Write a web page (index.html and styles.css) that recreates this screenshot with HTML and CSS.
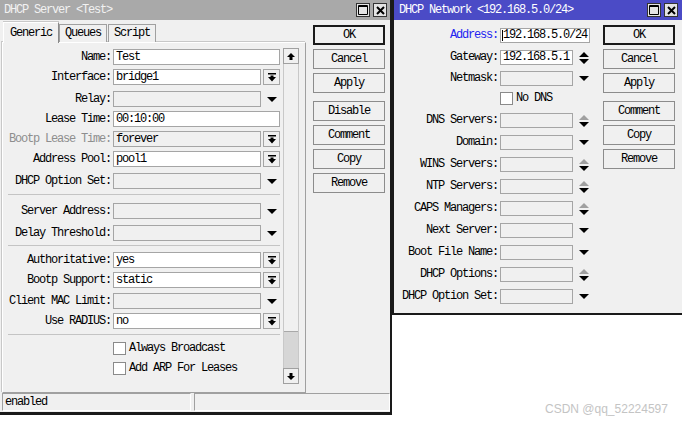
FILE: index.html
```html
<!DOCTYPE html>
<html lang="en">
<head>
  <meta charset="UTF-8">
  <title>DHCP Server</title>
  <link rel="stylesheet" href="styles.css">
</head>
<body>
  <div class="desk">

    <div class="win server">
      <div class="titlebar gray">
        <span class="title">DHCP Server &lt;Test&gt;</span>
        <span class="tbtns">
          <span class="tbtn"><svg width="10" height="10" viewBox="0 0 10 10"><path d="M0.5 0.5H9.5V9.5H0.5Z M0.5 1.5H9.5" fill="none" stroke="#000"/></svg></span>
          <span class="tbtn"><svg width="9" height="9" viewBox="0 0 9 9"><path d="M1 1L8 8M8 1L1 8" stroke="#000" stroke-width="2"/></svg></span>
        </span>
      </div>
      <div class="body">
        <div class="tabarea">
          <div class="tabs">
            <span class="tab sel">Generic</span>
            <span class="tab">Queues</span>
            <span class="tab">Script</span>
          </div>
          <div class="panel">
            <div class="form">
              <div class="row"><span class="lbl">Name:</span><span class="field wide">Test</span></div>
              <div class="row"><span class="lbl">Interface:</span><span class="field">bridge1</span><span class="dd"><svg width="8" height="9" viewBox="0 0 8 9"><path d="M0 0H8V1.5H0Z M2.5 2.5H5.5V4H2.5Z M0 4H8L4 8.5Z"/></svg></span></div>
              <div class="row g2"><span class="lbl">Relay:</span><span class="field off"></span><span class="arrow"><svg width="10" height="5" viewBox="0 0 10 5"><path d="M0 0H10L5 5Z"/></svg></span></div>
              <div class="row"><span class="lbl">Lease Time:</span><span class="field wide">00:10:00</span></div>
              <div class="row"><span class="lbl dim">Bootp Lease Time:</span><span class="field off">forever</span><span class="dd"><svg width="8" height="9" viewBox="0 0 8 9"><path d="M0 0H8V1.5H0Z M2.5 2.5H5.5V4H2.5Z M0 4H8L4 8.5Z"/></svg></span></div>
              <div class="row"><span class="lbl">Address Pool:</span><span class="field">pool1</span><span class="dd"><svg width="8" height="9" viewBox="0 0 8 9"><path d="M0 0H8V1.5H0Z M2.5 2.5H5.5V4H2.5Z M0 4H8L4 8.5Z"/></svg></span></div>
              <div class="row g2"><span class="lbl">DHCP Option Set:</span><span class="field off"></span><span class="arrow"><svg width="10" height="5" viewBox="0 0 10 5"><path d="M0 0H10L5 5Z"/></svg></span></div>
              <div class="sep s1"></div>
              <div class="row"><span class="lbl">Server Address:</span><span class="field off"></span><span class="arrow"><svg width="10" height="5" viewBox="0 0 10 5"><path d="M0 0H10L5 5Z"/></svg></span></div>
              <div class="row g2"><span class="lbl">Delay Threshold:</span><span class="field off"></span><span class="arrow"><svg width="10" height="5" viewBox="0 0 10 5"><path d="M0 0H10L5 5Z"/></svg></span></div>
              <div class="sep s2"></div>
              <div class="row"><span class="lbl">Authoritative:</span><span class="field">yes</span><span class="dd"><svg width="8" height="9" viewBox="0 0 8 9"><path d="M0 0H8V1.5H0Z M2.5 2.5H5.5V4H2.5Z M0 4H8L4 8.5Z"/></svg></span></div>
              <div class="row"><span class="lbl">Bootp Support:</span><span class="field">static</span><span class="dd"><svg width="8" height="9" viewBox="0 0 8 9"><path d="M0 0H8V1.5H0Z M2.5 2.5H5.5V4H2.5Z M0 4H8L4 8.5Z"/></svg></span></div>
              <div class="row g1"><span class="lbl">Client MAC Limit:</span><span class="field off"></span><span class="arrow"><svg width="10" height="5" viewBox="0 0 10 5"><path d="M0 0H10L5 5Z"/></svg></span></div>
              <div class="row"><span class="lbl">Use RADIUS:</span><span class="field">no</span><span class="dd"><svg width="8" height="9" viewBox="0 0 8 9"><path d="M0 0H8V1.5H0Z M2.5 2.5H5.5V4H2.5Z M0 4H8L4 8.5Z"/></svg></span></div>
              <div class="sep s3"></div>
              <div class="check"><span class="box"></span>Always Broadcast</div>
              <div class="check"><span class="box"></span>Add ARP For Leases</div>
            </div>
            <div class="scroll">
              <span class="sbtn"><svg width="8" height="7" viewBox="0 0 8 7"><path d="M4 0L8 4H0Z M2.5 4H5.5V7H2.5Z"/></svg></span>
              <span class="track"><span class="thumb"></span></span>
              <span class="sbtn"><svg width="8" height="7" viewBox="0 0 8 7"><path d="M4 7L8 3H0Z M2.5 0H5.5V3H2.5Z"/></svg></span>
            </div>
          </div>
        </div>
        <div class="btns">
          <span class="btn def">OK</span>
          <span class="btn">Cancel</span>
          <span class="btn">Apply</span>
          <span class="btn more">Disable</span>
          <span class="btn">Comment</span>
          <span class="btn">Copy</span>
          <span class="btn">Remove</span>
        </div>
      </div>
      <div class="status">
        <span class="cell first">enabled</span>
        <span class="cell second"></span>
      </div>
    </div>

    <div class="win network">
      <div class="titlebar blue">
        <span class="title">DHCP Network &lt;192.168.5.0/24&gt;</span>
        <span class="tbtns">
          <span class="tbtn"><svg width="10" height="10" viewBox="0 0 10 10"><path d="M0.5 0.5H9.5V9.5H0.5Z M0.5 1.5H9.5" fill="none" stroke="#000"/></svg></span>
          <span class="tbtn"><svg width="9" height="9" viewBox="0 0 9 9"><path d="M1 1L8 8M8 1L1 8" stroke="#000" stroke-width="2"/></svg></span>
        </span>
      </div>
      <div class="body">
        <div class="form">
          <div class="row h22"><span class="lbl focus">Address:</span><span class="field addr"><span class="caret"></span>192.168.5.0/24</span></div>
          <div class="row"><span class="lbl">Gateway:</span><span class="field">192.168.5.1</span><span class="arrow"><svg width="10" height="12" viewBox="0 0 10 12"><path d="M5 0L10 5H0Z M0 7H10L5 12Z"/></svg></span></div>
          <div class="row"><span class="lbl">Netmask:</span><span class="field off"></span><span class="arrow"><svg width="10" height="5" viewBox="0 0 10 5"><path d="M0 0H10L5 5Z"/></svg></span></div>
          <div class="row"><span class="lbl"></span><span class="box"></span><span class="boxtext">No DNS</span></div>
          <div class="row h22"><span class="lbl">DNS Servers:</span><span class="field off"></span><span class="arrow"><svg width="10" height="12" viewBox="0 0 10 12"><path d="M5 0L10 5H0Z" fill="#a0a0a0"/><path d="M0 7H10L5 12Z"/></svg></span></div>
          <div class="row h22"><span class="lbl">Domain:</span><span class="field off"></span><span class="arrow"><svg width="10" height="5" viewBox="0 0 10 5"><path d="M0 0H10L5 5Z"/></svg></span></div>
          <div class="row h22"><span class="lbl">WINS Servers:</span><span class="field off"></span><span class="arrow"><svg width="10" height="12" viewBox="0 0 10 12"><path d="M5 0L10 5H0Z" fill="#a0a0a0"/><path d="M0 7H10L5 12Z"/></svg></span></div>
          <div class="row h22"><span class="lbl">NTP Servers:</span><span class="field off"></span><span class="arrow"><svg width="10" height="12" viewBox="0 0 10 12"><path d="M5 0L10 5H0Z" fill="#a0a0a0"/><path d="M0 7H10L5 12Z"/></svg></span></div>
          <div class="row h22"><span class="lbl">CAPS Managers:</span><span class="field off"></span><span class="arrow"><svg width="10" height="12" viewBox="0 0 10 12"><path d="M5 0L10 5H0Z" fill="#a0a0a0"/><path d="M0 7H10L5 12Z"/></svg></span></div>
          <div class="row h22"><span class="lbl">Next Server:</span><span class="field off"></span><span class="arrow"><svg width="10" height="5" viewBox="0 0 10 5"><path d="M0 0H10L5 5Z"/></svg></span></div>
          <div class="row h22"><span class="lbl">Boot File Name:</span><span class="field off"></span><span class="arrow"><svg width="10" height="5" viewBox="0 0 10 5"><path d="M0 0H10L5 5Z"/></svg></span></div>
          <div class="row h22"><span class="lbl">DHCP Options:</span><span class="field off"></span><span class="arrow"><svg width="10" height="12" viewBox="0 0 10 12"><path d="M5 0L10 5H0Z" fill="#a0a0a0"/><path d="M0 7H10L5 12Z"/></svg></span></div>
          <div class="row h22"><span class="lbl">DHCP Option Set:</span><span class="field off"></span><span class="arrow"><svg width="10" height="5" viewBox="0 0 10 5"><path d="M0 0H10L5 5Z"/></svg></span></div>
        </div>
        <div class="btns">
          <span class="btn def">OK</span>
          <span class="btn">Cancel</span>
          <span class="btn">Apply</span>
          <span class="btn more">Comment</span>
          <span class="btn">Copy</span>
          <span class="btn">Remove</span>
        </div>
      </div>
    </div>

  </div>
  <div class="watermark">CSDN @qq_52224597</div>
</body>
</html>
```

FILE: styles.css
```css
body {
  margin: 0;
  background: #fff;
  font-family: "Liberation Mono", monospace;
  font-size: 12px;
  letter-spacing: -1.2px;
  color: #000;
}

.desk {
  display: flex;
  align-items: flex-start;
}

.win {
  background: #f0f0f0;
}

.server {
  width: 390px;
  height: 412px;
  border-right: 2px solid #1a1a1a;
  border-bottom: 3px solid #1a1a1a;
}

.network {
  width: 288px;
  height: 313px;
  border-left: 2px solid #1a1a1a;
  border-bottom: 2px solid #1a1a1a;
}

/* title bars */
.titlebar {
  height: 20px;
  display: flex;
  align-items: center;
  justify-content: space-between;
  line-height: 20px;
}

.titlebar.gray {
  background: #a9a9a9;
  color: #f2f2f2;
  padding: 0 3px 0 4px;
}

.titlebar.blue {
  background: #4b4bc6;
  color: #fff;
  padding: 0 4px 0 5px;
}

.tbtns {
  display: flex;
  gap: 3px;
}

.tbtn {
  width: 14px;
  height: 14px;
  box-sizing: border-box;
  border: 1px solid #333;
  background: #e4e4e4;
  display: flex;
  align-items: center;
  justify-content: center;
}

.body {
  display: flex;
  align-items: flex-start;
}

.server .body {
  padding: 2px 0 0 2px;
}

/* tabs */
.tabarea {
  width: 304px;
}

.tabs {
  display: flex;
  align-items: flex-end;
  height: 20px;
  padding-left: 1px;
}

.tab {
  height: 18px;
  line-height: 17px;
  padding: 0 5px;
  border: 1px solid #a0a0a0;
  border-bottom: none;
  box-sizing: border-box;
  background: #f0f0f0;
  margin-right: 1px;
}

.tab.sel {
  height: 21px;
  line-height: 21px;
  padding: 0 6px;
  margin-bottom: -1px;
  margin-right: 0;
  position: relative;
  border-color: #fff #8a8a8a #fff #fff;
  box-shadow: 0 -1px 0 #c8c8c8;
}

.panel {
  height: 351px;
  box-sizing: border-box;
  border: 1px solid #a0a0a0;
  border-top-color: #fff;
  border-left-color: #fff;
  box-shadow: -1px -1px 0 #c8c8c8;
  display: flex;
  align-items: flex-start;
}

/* form rows */
.form {
  width: 280px;
  padding-top: 6px;
}

.row {
  display: flex;
  align-items: flex-start;
  height: 20px;
}

.row.g2 {
  margin-top: 2px;
}

.row.g1 {
  margin-top: 1px;
}

.lbl {
  width: 108px;
  margin-right: 2px;
  flex: none;
  text-align: right;
  line-height: 16px;
  white-space: nowrap;
}

.lbl.dim {
  color: #8e8e8e;
}

.lbl.focus {
  color: #2424f0;
}

.field {
  width: 148px;
  height: 16px;
  box-sizing: border-box;
  border: 1px solid #a5a5a5;
  background: #fff;
  padding-left: 2px;
  line-height: 14px;
  flex: none;
  overflow: hidden;
  white-space: nowrap;
}

.field.wide {
  width: 167px;
}

.field.off {
  background: #f0f0f0;
}

.dd {
  width: 17px;
  height: 16px;
  margin-left: 2px;
  box-sizing: border-box;
  border: 1px solid #a5a5a5;
  display: flex;
  align-items: center;
  justify-content: center;
}

.arrow {
  width: 17px;
  height: 16px;
  margin-left: 2px;
  display: flex;
  align-items: center;
  justify-content: center;
}

.sep {
  height: 1px;
  background: #c4c4c4;
  margin-left: 5px;
  width: 272px;
}

.sep.s1 {
  margin-top: 1px;
  margin-bottom: 8px;
}

.sep.s2 {
  margin-bottom: 6px;
}

.sep.s3 {
  margin-top: 1px;
  margin-bottom: 7px;
}

.check {
  display: flex;
  align-items: flex-start;
  height: 20px;
  padding-left: 110px;
  line-height: 13px;
}

.box {
  width: 13px;
  height: 13px;
  box-sizing: border-box;
  border: 1px solid #8a8a8a;
  background: #fff;
  margin-right: 3px;
  flex: none;
}

/* scrollbar */
.scroll {
  width: 16px;
  height: 336px;
  margin-top: 5px;
  display: flex;
  flex-direction: column;
}

.sbtn {
  height: 16px;
  box-sizing: border-box;
  border: 1px solid #a0a0a0;
  background: #f0f0f0;
  display: flex;
  align-items: center;
  justify-content: center;
}

.track {
  flex: 1;
  display: flex;
  flex-direction: column;
  justify-content: flex-end;
  border-left: 1px solid #c8c8c8;
  border-right: 1px solid #c8c8c8;
}

.thumb {
  height: 36px;
  background: #d6d6d6;
  border-top: 1px solid #a8a8a8;
}

/* buttons */
.btns {
  width: 72px;
  display: flex;
  flex-direction: column;
  gap: 4px;
  flex: none;
}

.server .btns {
  margin: 3px 0 0 7px;
}

.network .btns {
  margin: 5px 0 0 13px;
}

.btn {
  height: 20px;
  box-sizing: border-box;
  border: 1px solid #8c8c8c;
  background: #f0f0f0;
  text-align: center;
  line-height: 18px;
}

.btn.def {
  border: 2px solid #1a1a1a;
  line-height: 16px;
}

.btn.more {
  margin-top: 4px;
}

/* status bar */
.status {
  display: flex;
  gap: 3px;
  height: 18px;
  padding-left: 2px;
}

.cell {
  box-sizing: border-box;
  border: 1px solid #a0a0a0;
  border-right-color: #fff;
  border-bottom-color: #fff;
  line-height: 16px;
  padding-left: 2px;
}

.cell.first {
  width: 189px;
}

.cell.second {
  width: 196px;
}

/* network window form */
.network .form {
  width: 196px;
  padding-top: 8px;
}

.network .row {
  height: 21px;
}

.network .row.h22 {
  height: 22px;
}

.network .lbl {
  width: 104px;
  line-height: 15px;
}

.network .field {
  width: 73px;
  height: 15px;
  line-height: 13px;
}

.network .field.addr {
  width: 90px;
  position: relative;
}

.caret {
  position: absolute;
  left: 1px;
  top: 1px;
  width: 1px;
  height: 11px;
  background: #000;
}

.network .arrow {
  width: 13px;
  height: 15px;
  margin-left: 4px;
}

.network .box {
  margin-right: 3px;
}

.boxtext {
  line-height: 13px;
}

.watermark {
  position: absolute;
  left: 545px;
  top: 402px;
  font-family: "Liberation Sans", sans-serif;
  font-size: 12px;
  letter-spacing: 0;
  color: #c4c4c4;
}
```
